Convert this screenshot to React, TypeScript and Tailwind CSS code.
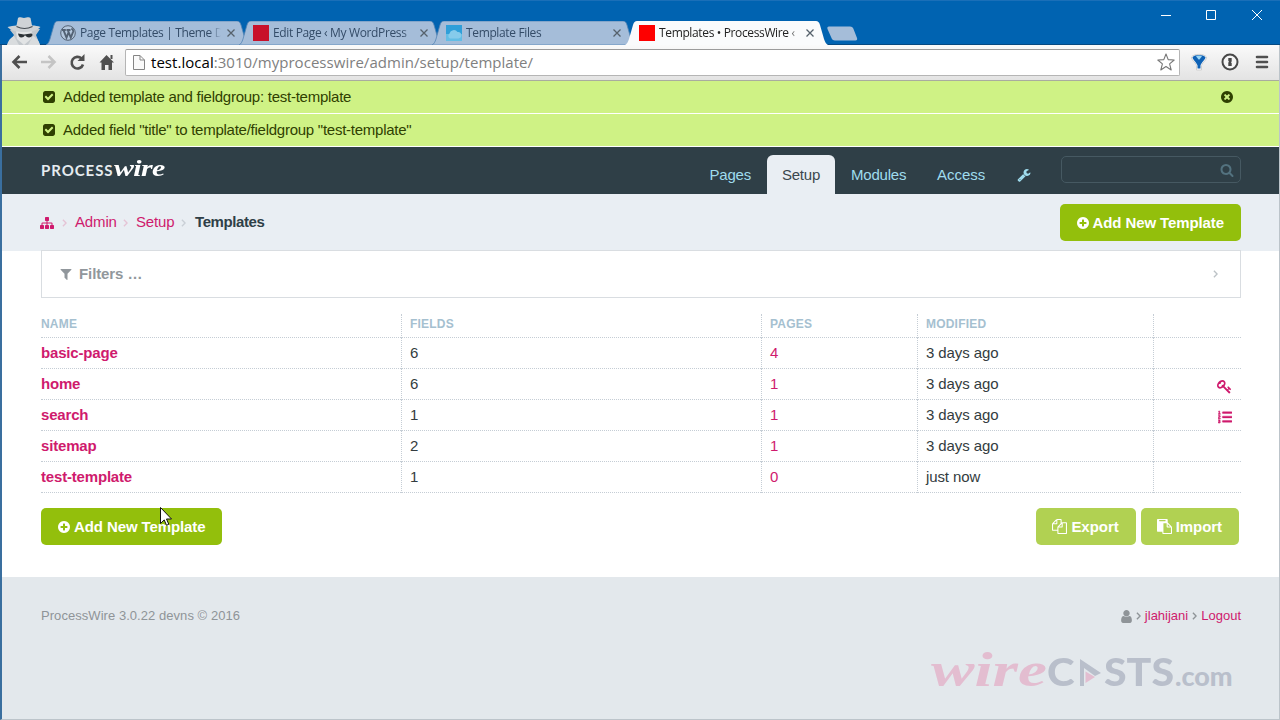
import type { ReactNode } from 'react'
import { FaListOl } from 'react-icons/fa'

const icons = {
  checkSquare:
    'M813 1299l614-614q19-19 19-45t-19-45l-102-102q-19-19-45-19t-45 19l-467 467-211-211q-19-19-45-19t-45 19l-102 102q-19 19-19 45t19 45l358 358q19 19 45 19t45-19zm851-883v960q0 119-84.500 203.500t-203.500 84.500h-960q-119 0-203.500-84.500t-84.500-203.500v-960q0-119 84.500-203.500t203.500-84.500h960q119 0 203.500 84.500t84.500 203.500z',
  timesCircle:
    'M1277 1122q0-26-19-45l-181-181 181-181q19-19 19-45 0-27-19-46l-90-90q-19-19-46-19-26 0-45 19l-181 181-181-181q-19-19-45-19-27 0-46 19l-90 90q-19 19-19 46 0 26 19 45l181 181-181 181q-19 19-19 45 0 27 19 46l90 90q19 19 46 19 26 0 45-19l181-181 181 181q19 19 45 19 27 0 46-19l90-90q19-19 19-46zm387-226q0 209-103 385.500t-279.500 279.500-385.500 103-385.500-103-279.500-279.500-103-385.500 103-385.500 279.500-279.500 385.500-103 385.500 103 279.500 279.500 103 385.500z',
  plusCircle:
    'M1344 960v-128q0-26-19-45t-45-19h-256v-256q0-26-19-45t-45-19h-128q-26 0-45 19t-19 45v256h-256q-26 0-45 19t-19 45v128q0 26 19 45t45 19h256v256q0 26 19 45t45 19h128q26 0 45-19t19-45v-256h256q26 0 45-19t19-45zm320-64q0 209-103 385.500t-279.500 279.500-385.500 103-385.500-103-279.500-279.500-103-385.500 103-385.500 279.500-279.500 385.500-103 385.500 103 279.500 279.500 103 385.500z',
  sitemap:
    'M1792 1248v320q0 40-28 68t-68 28h-320q-40 0-68-28t-28-68v-320q0-40 28-68t68-28h96v-192h-512v192h96q40 0 68 28t28 68v320q0 40-28 68t-68 28h-320q-40 0-68-28t-28-68v-320q0-40 28-68t68-28h96v-192h-512v192h96q40 0 68 28t28 68v320q0 40-28 68t-68 28h-320q-40 0-68-28t-28-68v-320q0-40 28-68t68-28h96v-192q0-52 38-90t90-38h512v-192h-96q-40 0-68-28t-28-68v-320q0-40 28-68t68-28h320q40 0 68 28t28 68v320q0 40-28 68t-68 28h-96v192h512q52 0 90 38t38 90v192h96q40 0 68 28t28 68z',
  filter:
    'M1595 295q17 41-14 70l-493 493v742q0 42-39 59-13 5-25 5-27 0-45-19l-256-256q-19-19-19-45v-486l-493-493q-31-29-14-70 17-39 59-39h1280q42 0 59 39z',
  wrench:
    'M448 1472q0-26-19-45t-45-19-45 19-19 45 19 45 45 19 45-19 19-45zm644-420l-682 682q-37 37-90 37-52 0-91-37l-106-108q-38-36-38-90 0-53 38-91l681-681q39 98 114.500 173.500t173.500 114.500zm634-435q0 39-23 106-47 134-164.500 217.500t-258.500 83.500q-185 0-316.500-131.500t-131.500-316.500 131.500-316.500 316.500-131.500q58 0 121.500 16.500t107.500 46.500q16 11 16 28t-16 28l-293 169v224l193 107q5-3 79-48.500t135.500-81 70.500-35.500q15 0 23.500 10t8.500 25z',
  search:
    'M1216 832q0-185-131.500-316.500t-316.500-131.500-316.500 131.500-131.500 316.500 131.500 316.500 316.500 131.500 316.500-131.500 131.500-316.500zm512 832q0 52-38 90t-90 38q-54 0-90-38l-343-342q-179 124-399 124-143 0-273.500-55.500t-225-150-150-225-55.500-273.500 55.500-273.500 150-225 225-150 273.500-55.500 273.500 55.500 225 150 150 225 55.500 273.500q0 220-124 399l343 343q37 37 37 90z',
  key: 'M832 512q0-80-56-136t-136-56-136 56-56 136q0 42 19 83-41-19-83-19-80 0-136 56t-56 136 56 136 136 56 136-56 56-136q0-42-19-83 41 19 83 19 80 0 136-56t56-136zm851 704q0 17-49 66t-66 49q-9 0-28.500-16t-36.500-33-38.500-40-24.500-26l-96 96 220 220q28 28 28 68 0 42-39 81t-81 39q-40 0-68-28l-671-671q-176 131-365 131-163 0-265.500-102.500t-102.500-265.500q0-160 95-313t248-248 313-95q163 0 265.500 102.500t102.500 265.500q0 189-131 365l355 355 96-96q-3-3-26-24.500t-40-38.500-33-36.500-16-28.500q0-17 49-66t66-49q13 0 23 10 6 6 46 44.500t82 79.500 86.500 86 73 78 28.500 41z',
  files:
    'M1696 384q40 0 68 28t28 68v1216q0 40-28 68t-68 28h-960q-40 0-68-28t-28-68v-288h-544q-40 0-68-28t-28-68v-672q0-40 20-88t48-76l408-408q28-28 76-48t88-20h416q40 0 68 28t28 68v328q68-40 128-40h416zm-544 213l-299 299h299v-299zm-640-384l-299 299h299v-299zm196 647l316-316v-416h-384v416q0 40-28 68t-68 28h-416v640h512v-256q0-40 20-88t48-76zm956 804v-1152h-384v416q0 40-28 68t-68 28h-416v640h896z',
  paste:
    'M768 1664h896v-640h-416q-40 0-68-28t-28-68v-416h-384v1152zm256-1440v-64q0-13-9.500-22.500t-22.500-9.500h-704q-13 0-22.500 9.500t-9.500 22.500v64q0 13 9.500 22.500t22.500 9.500h704q13 0 22.500-9.500t9.500-22.500zm256 672h299l-299-299v299zm512 128v672q0 40-28 68t-68 28h-960q-40 0-68-28t-28-68v-160h-544q-40 0-68-28t-28-68v-1344q0-40 28-68t68-28h1088q40 0 68 28t28 68v328q21 13 36 28l408 408q28 28 48 76t20 88z',
  user: 'M1536 1399q0 109-62.500 187t-150.500 78h-854q-88 0-150.500-78t-62.500-187q0-85 8.500-160.500t31.500-152 58.500-131 94-89 134.500-34.500q131 128 313 128t313-128q76 0 134.500 34.500t94 89 58.500 131 31.500 152 8.500 160.500zm-256-887q0 159-112.500 271.500t-271.500 112.500-271.500-112.500-112.500-271.500 112.500-271.500 271.500-112.500 271.500 112.500 112.500 271.500z',
}

function Icon({ name, className }: { name: keyof typeof icons; className?: string }) {
  return (
    <svg viewBox="0 0 1792 1792" fill="currentColor" className={className ?? 'h-[14px] w-[14px]'}>
      <path d={icons[name]} />
    </svg>
  )
}

function Chevron({ className }: { className: string }) {
  return (
    <svg viewBox="0 0 6 10" fill="none" stroke="currentColor" strokeWidth="1.700" className={className}>
      <path d="M1 1l4 4-4 4" />
    </svg>
  )
}

function Incognito() {
  return (
    <svg viewBox="0 0 34 28" className="h-7 w-[34px]">
      <path d="M3 13l4 5-7 10h33l-4-10 4-6-9-2H10z" fill="#c3c8cc" />
      <path d="M9 13h16l-1 9-7 6-7-6z" fill="#e2e4e5" />
      <path d="M0 28c1-4 3-7 7-9l5 9zM33 28c-1-4-3-7-7-9l-5 9z" fill="#d9dcde" />
      <path d="M.5 10c3-1 6-1.500 9-1.500L11 1c1-1.500 4 0 6 0s5-1.500 6.500 0L25 8.500c3 0 6 .5 8.500 1.500-4 4-10 5-16.500 5S4 14 .5 10z" fill="#cfd3d6" />
      <path d="M9.500 9.500c5 2.500 11 2.500 16 0" fill="none" stroke="#454c52" strokeWidth="1.200" />
      <path d="M11 16.500l6 1 7-1c3 .500 1 4-2 4-2 0-3-1-4-2.200C17 20 16 20.500 14.500 20.500c-2.500 0-3-2-3.500-4z" fill="#2c3236" />
    </svg>
  )
}

function Favicon({ kind }: { kind: string }) {
  if (kind === 'wordpress') {
    return (
      <svg viewBox="0 0 16 16" className="h-4 w-4">
        <circle cx="8" cy="8" r="7.300" fill="#b4c8de" stroke="#536274" strokeWidth="1" />
        <path
          d="M2 5h3.800M6.500 5h4M3.500 5.200l3 7.500L8.700 7M7.800 5.200l3 7.500L13.200 6.500c.3-1.500-1-2.500-1.800-3"
          fill="none"
          stroke="#536274"
          strokeWidth="1.900"
        />
      </svg>
    )
  }
  if (kind === 'cloud') {
    return (
      <svg viewBox="0 0 16 16" className="h-4 w-4">
        <path d="M0 0h16v16H0z" fill="#2f9fd9" />
        <path d="M0 9h16v7H0z" fill="#62bde5" />
        <path d="M4 13.500a3 3 0 01-.5-5 4.500 4.500 0 018-1.500 3 3 0 011 6.500z" fill="#86cbeb" />
      </svg>
    )
  }
  return <span className={kind === 'crimson' ? 'h-4 w-4 bg-[#c8102a]' : 'h-4 w-4 bg-[#fe0000]'} />
}

const tabs = [
  { icon: 'wordpress', title: 'Page Templates | Theme D', active: false },
  { icon: 'crimson', title: 'Edit Page ‹ My WordPress', active: false },
  { icon: 'cloud', title: 'Template Files', active: false },
  { icon: 'red', title: 'Templates • ProcessWire ‹', active: true },
]

function Tab({ tab }: { tab: (typeof tabs)[number] }) {
  return (
    <div className={`relative -mr-[10px] flex h-6 w-[203px] shrink-0 items-center pr-3 pl-[14px] ${tab.active ? 'z-10' : ''}`}>
      <svg viewBox="0 0 203 24" className="absolute inset-0 h-6 w-[203px]">
        <path
          d="M0 24c2-1 3-3 4-6L8 4c1-3 2-4 4-4h179c2 0 3 1 4 4l4 14c1 3 2 5 4 6z"
          fill={tab.active ? '#fafbfc' : '#a5bdd9'}
          stroke={tab.active ? 'none' : '#5585b5'}
          strokeWidth="0.800"
        />
      </svg>
      <span className="relative flex w-full items-center">
        <Favicon kind={tab.icon} />
        <span
          className={`ml-1 w-[141px] mask-r-from-92% font-['Open_Sans',sans-serif] text-xs tracking-[-0.36px] whitespace-nowrap ${tab.active ? 'text-[#222]' : 'text-[#344c68]'}`}
        >
          {tab.title}
        </span>
        <svg viewBox="0 0 8 8" className="ml-[6px] h-2 w-2" stroke="#56616c" strokeWidth="1.300">
          <path d="M.5.5l7 7M7.500.5l-7 7" />
        </svg>
      </span>
    </div>
  )
}

function TitleBar() {
  return (
    <div className="flex h-[45px] items-end border-t border-[#1a6fb8] bg-[#0063b1] shadow-[inset_0_-1px_0_#064a82]">
      <div className="flex h-full w-[46px] items-end pl-[7px]">
        <Incognito />
      </div>
      <div className="flex">
        {tabs.map((tab) => (
          <Tab key={tab.title} tab={tab} />
        ))}
      </div>
      <svg viewBox="0 0 32 15" className="mb-1 ml-[8px] h-[15px] w-8">
        <path d="M3 .5h21c2 0 3 1 3.500 2.500L31 12c.5 1.500 0 2.500-1.500 2.500H9c-2 0-3-1-3.500-2.500L1.500 3C1 1.500 1.500.5 3 .5z" fill="#a5bdd9" />
      </svg>
      <svg viewBox="0 0 104 12" className="mr-4 mb-6 ml-auto h-3 w-[104px]" fill="none" stroke="#fff">
        <path d="M1 6.500h10M46.500 1.500h9v9h-9zM92 1l10 10M102 1L92 11" />
      </svg>
    </div>
  )
}

function Toolbar() {
  return (
    <div className="flex h-9 items-center border-b border-[#a9ac9f] bg-linear-to-b from-[#fafafa] to-[#e3e3e3] pb-px pl-[9px]">
      <svg viewBox="0 0 108 18" className="h-[18px] w-[108px]" fill="none" stroke="#505050" strokeWidth="2.600">
        <path d="M16 9H3M8.500 3L2.500 9l6 6" />
        <path d="M30 9h13M37.500 3l6 6-6 6" stroke="#c4c4c4" />
        <path d="M70.500 5.500A5.800 5.800 0 1072 11.500" />
        <path d="M73.500 1v7h-7z" fill="#505050" stroke="none" />
        <path d="M95.500 2l7.500 7.500h-2V17h-3.500v-5h-3.500v5H90.500V9.500h-2z" fill="#505050" stroke="none" />
        <path d="M100.500 2V6" strokeWidth="2" />
      </svg>
      <div className="ml-1.5 flex h-[27px] w-[1055px] items-center rounded-[2px] border border-[#b5b5b5] border-t-[#9b9b9b] bg-white pr-1 pl-[7px]">
        <svg viewBox="0 0 12 15" className="h-[15px] w-3" fill="#fafafa" stroke="#858585">
          <path d="M.5.5h6.500l4.500 4.500v9.500H.5zM7 .5V5h4.500" />
        </svg>
        <span className="ml-[6px] font-['Open_Sans',sans-serif] text-[15px] tracking-[0.04px] whitespace-nowrap text-[#808080]">
          <span className="text-black">test.local</span>:3010/myprocesswire/admin/setup/template/
        </span>
        <svg viewBox="0 0 18 18" className="ml-auto h-[18px] w-[18px]" fill="#fff" stroke="#777" strokeWidth="1.100">
          <path d="M9 1l2.200 5.600 6 .4-4.600 3.800L14.200 17 9 13.500 3.800 17l1.600-6.200L.8 7l6-.4z" strokeLinejoin="round" />
        </svg>
      </div>
      <svg viewBox="0 0 18 18" className="ml-[10px] h-[18px] w-[18px]">
        <path d="M1.500 4C4 .5 14 .5 16.500 4c.5 3-4 5-5 8.500V17h-5v-4.500C5.500 9 1 7 1.500 4z" fill="#fff" stroke="#d0d0d0" />
        <path d="M2.500 4.200c2-3 11-3 13 0 0 2.300-4 5-5 8.300v3h-3v-3c-1-3.300-5-6-5-8.300z" fill="#0f62b5" />
        <path d="M6 3.200c2-1 4-1 6 0L9.500 6.500h-1z" fill="#9bd6f5" />
      </svg>
      <svg viewBox="0 0 18 18" className="ml-[13px] h-[18px] w-[18px]">
        <circle cx="9" cy="9" r="7.500" fill="#f5f5f5" stroke="#484848" strokeWidth="2" />
        <path d="M7.300 5h3.400v3.500l-.8.700.8.800V13H7.300V9.500l.8-.700-.8-.800z" fill="#484848" />
      </svg>
      <svg viewBox="0 0 14 14" className="ml-4 h-[14px] w-[14px]" stroke="#505050" strokeWidth="2.600" strokeLinecap="round">
        <path d="M2 2h10M2 7h10M2 12h10" />
      </svg>
    </div>
  )
}

function Message({ children, closable }: { children: ReactNode; closable?: boolean }) {
  return (
    <div className="flex h-[33px] items-center border-b border-white bg-[#cff285] pr-[45px] pl-10 tracking-[-0.255px] text-[#2f4001]">
      <Icon name="checkSquare" className="mr-px h-[14px] w-[14px]" />
      <span className="ml-[6px]">{children}</span>
      {closable && <Icon name="timesCircle" className="ml-auto h-[14px] w-[14px]" />}
    </div>
  )
}

function Button({ icon, muted, children }: { icon: keyof typeof icons; muted?: boolean; children: ReactNode }) {
  return (
    <button
      className={`flex h-[37px] items-center rounded-[5px] font-bold text-white ${muted ? 'bg-[#b1d152] pr-[17px] pl-[16px] tracking-[-0.05px]' : 'bg-[#93bf0c] pr-[17px] pl-4 tracking-[-0.1px]'}`}
    >
      <Icon name={icon} className={muted ? 'mr-px h-[15px] w-[15px]' : undefined} />
      <span className="ml-[3px]">{children}</span>
    </button>
  )
}

function Header() {
  return (
    <header className="flex h-[47px] bg-[#2f3f47] pr-[38px] pl-[39px]">
      <div className="flex h-[47px] items-baseline pt-2 leading-7 text-[#e5ebef]">
        <span className="font-['Lato',sans-serif] text-[15px] font-bold tracking-[0.95px]">PROCESS</span>
        <span className="inline-block origin-left scale-x-[1.3] font-['Liberation_Serif',serif] text-[23px] font-bold tracking-[-0.5px] text-white italic">
          wire
        </span>
      </div>
      <nav className="ml-auto flex items-end tracking-[-0.2px] text-[#9fdcee]">
        <a className="flex h-[39px] items-center pr-[16px]">Pages</a>
        <a className="flex h-[39px] w-[68px] items-center justify-center rounded-t-[6px] bg-[#e9eef3] text-[#3b474d]">Setup</a>
        <a className="flex h-[39px] w-[85px] items-center pl-4">Modules</a>
        <a className="flex h-[39px] w-[82px] items-center pl-[17px] tracking-normal">Access</a>
        <a className="flex h-[39px] w-[44px] items-center pl-[15px]">
          <Icon name="wrench" />
        </a>
      </nav>
      <div className="mt-[9px] ml-[15px] flex h-[27px] w-[180px] items-center justify-end rounded-[5px] border border-[#465962] pr-[6px] text-[#53727f]">
        <Icon name="search" />
      </div>
    </header>
  )
}

const templates: { name: string; fields: number; pages: number; modified: string; icon?: ReactNode }[] = [
  { name: 'basic-page', fields: 6, pages: 4, modified: '3 days ago' },
  { name: 'home', fields: 6, pages: 1, modified: '3 days ago', icon: <Icon name="key" className="h-[15px] w-[15px]" /> },
  {
    name: 'search',
    fields: 1,
    pages: 1,
    modified: '3 days ago',
    icon: <FaListOl className="h-[14px] w-[14px]" stroke="currentColor" strokeWidth={14} />,
  },
  { name: 'sitemap', fields: 2, pages: 1, modified: '3 days ago' },
  { name: 'test-template', fields: 1, pages: 0, modified: 'just now' },
]

function TemplateTable() {
  return (
    <table className="mt-4 w-[1200px] table-fixed border-separate border-spacing-0 text-left">
      <colgroup>
        <col className="w-[360px]" />
        <col className="w-[360px]" />
        <col className="w-[156px]" />
        <col className="w-[236px]" />
        <col className="w-[88px]" />
      </colgroup>
      <thead>
        <tr className="h-6 text-xs leading-[18px] tracking-[0.2px] text-[#a5c0d0] uppercase [&>th]:border-b [&>th]:border-dotted [&>th]:border-[#c5cdd5] [&>th]:p-0 [&>th]:pb-1 [&>th+th]:border-l [&>th+th]:pl-2">
          <th>Name</th>
          <th>Fields</th>
          <th>Pages</th>
          <th>Modified</th>
          <th />
        </tr>
      </thead>
      <tbody>
        {templates.map((template) => (
          <tr
            key={template.name}
            className="h-[31px] tracking-[-0.1px] [&>td]:border-b [&>td]:border-dotted [&>td]:border-[#c5cdd5] [&>td]:p-0 [&>td+td]:border-l [&>td+td]:pl-2"
          >
            <td className="font-bold tracking-[-0.18px] text-[#cf1a6d]">{template.name}</td>
            <td>{template.fields}</td>
            <td className="text-[#cf1a6d]">{template.pages}</td>
            <td>{template.modified}</td>
            <td className="text-[#cf1a6d]">
              <span className="flex justify-end pt-1 pr-[9px]">{template.icon}</span>
            </td>
          </tr>
        ))}
      </tbody>
    </table>
  )
}

function Watermark() {
  return (
    <div className="absolute top-[645px] left-[931px] flex h-[50px] items-baseline leading-[50px] font-bold text-[#b9bfcb]">
      <span className="inline-block w-[116px]">
        <span className="inline-block origin-left scale-x-[1.33] font-['Liberation_Serif',serif] text-[49px] text-[#e3bdd0] italic">
          wire
        </span>
      </span>
      <span className="inline-block w-8 font-['Lato',sans-serif] text-[38px] font-black">
        <span className="inline-block origin-left scale-x-110">C</span>
      </span>
      <svg viewBox="0 0 22 27" className="h-[27px] w-[22px]">
        <path d="M1 0l21 14-6 3L5 9v18H1z" fill="#b9bfcb" />
        <path d="M6.500 12.500l9.500 5.500-9.500 6z" fill="#e3bdd0" />
      </svg>
      <span className="ml-[3px] inline-block w-[71px] font-['Lato',sans-serif] text-[38px] font-black">
        <span className="inline-block origin-left scale-x-[1.08]">STS</span>
      </span>
      <span className="font-['Lato',sans-serif] text-[27px] font-black">.com</span>
    </div>
  )
}

export default function App() {
  return (
    <div className="relative flex h-[720px] w-[1280px] flex-col overflow-hidden bg-white font-['Liberation_Sans',Arial,sans-serif] text-[15px] leading-5 text-[#333c40]">
      <TitleBar />
      <div className="flex min-h-0 flex-1 flex-col border-r border-b border-l-2 border-[#bcc4ca] border-l-[#3a6f9f]">
        <Toolbar />
        <Message closable>Added template and fieldgroup: test-template</Message>
        <Message>Added field "title" to template/fieldgroup "test-template"</Message>
        <Header />
        <div className="flex h-[57px] items-center bg-[#e9eef3] px-[38px] text-[#cf1a6d]">
          <nav className="flex items-center pb-0.5 tracking-[-0.15px]">
            <Icon name="sitemap" className="mt-0.5 mr-px h-[14px] w-[14px]" />
            <Chevron className="mt-0.5 mr-2 ml-[7px] h-2 w-[5px] text-[#e5c3d5]" />
            <a className="w-[41px]">Admin</a>
            <Chevron className="mt-0.5 mr-[8px] ml-[7px] h-2 w-[5px] text-[#e5c3d5]" />
            <a className="w-[38px]">Setup</a>
            <Chevron className="mt-0.5 mr-[9px] ml-[7px] h-2 w-[5px] text-[#c9cfd6]" />
            <span className="font-bold tracking-[-0.4px] text-[#2f3f47]">Templates</span>
          </nav>
          <div className="ml-auto">
            <Button icon="plusCircle">Add New Template</Button>
          </div>
        </div>
        <main className="flex-1 px-[39px]">
          <div className="-mt-px flex h-12 w-[1200px] items-center border border-[#d9dde1] pr-[22px] pl-[17px] font-bold text-[#91979c]">
            <Icon name="filter" />
            <span className="ml-[6px] tracking-[-0.1px]">Filters …</span>
            <Chevron className="ml-auto h-2 w-[5px] text-[#bcc2c6]" />
          </div>
          <TemplateTable />
          <div className="mt-[15px] flex w-[1198px] gap-[5px]">
            <Button icon="plusCircle">Add New Template</Button>
            <span className="flex-1" />
            <Button icon="files" muted>
              Export
            </Button>
            <Button icon="paste" muted>
              Import
            </Button>
          </div>
        </main>
        <footer className="flex h-[142px] items-start bg-[#e3e8ec] pt-[29px] pr-[38px] pl-[39px] text-[13px] text-[#8f9498]">
          <span className="tracking-[0.05px]">ProcessWire 3.0.22 devns © 2016</span>
          <div className="ml-auto flex items-center text-[#cf1a6d]">
            <Icon name="user" className="h-[15px] w-[15px] text-[#8f9498]" />
            <Chevron className="mr-1 ml-0.5 h-2 w-[5px] text-[#8f9498]" />
            <a>jlahijani</a>
            <Chevron className="mx-1 h-2 w-[5px] text-[#8f9498]" />
            <a>Logout</a>
          </div>
        </footer>
      </div>
      <Watermark />
      <svg viewBox="0 0 12 19" className="absolute top-[507px] left-[160px] h-[19px] w-3">
        <path d="M.5.500v16l3.700-3.600 2.300 5.400 2.300-1-2.300-5.300h5z" fill="#fff" stroke="#111" />
      </svg>
    </div>
  )
}
